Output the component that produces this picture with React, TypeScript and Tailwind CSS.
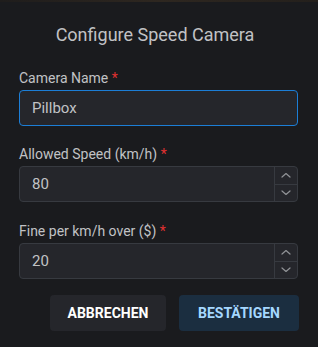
import React from "react";

function Chevron({ up }: { up?: boolean }) {
  return (
    <svg width="10" height="6" viewBox="0 0 10 6" fill="none" className="block">
      <path
        d={up ? "M1 5L5 1.5L9 5" : "M1 1L5 4.5L9 1"}
        stroke="#909296"
        strokeWidth="1.2"
        strokeLinecap="round"
        strokeLinejoin="round"
      />
    </svg>
  );
}

function Label({ text }: { text: string }) {
  return (
    <div className="text-[14px] leading-[22px] font-normal text-[#c1c2c5] mb-[1px]">
      {text} <span className="text-[#e03131]">*</span>
    </div>
  );
}

function NumberField({ label, value }: { label: string; value: string }) {
  return (
    <div>
      <Label text={label} />
      <div className="flex h-[36px] rounded-[4px] border border-[#373a40] bg-[#25262b]">
        <div className="flex flex-1 items-center pl-[12px] text-[15px] text-[#c1c2c5]">{value}</div>
        <div className="flex w-[23px] flex-col border-l border-[#373a40]">
          <div className="flex flex-1 items-center justify-center border-b border-[#373a40]">
            <Chevron up />
          </div>
          <div className="flex flex-1 items-center justify-center">
            <Chevron />
          </div>
        </div>
      </div>
    </div>
  );
}

export default function App() {
  return (
    <div
      className="w-[318px] h-[347px] bg-[#1a1b1e] overflow-hidden"
      style={{ fontFamily: "Roboto, 'Liberation Sans', sans-serif" }}
    >
      <div className="h-[2px] bg-gradient-to-r from-[#1f1d1c] via-[#2e2720] to-[#24201c]" />
      <div className="pl-[19px] pr-[20px]">
        <h2 className="mt-[19px] pr-[7px] text-center text-[18px] leading-[28px] text-[#c1c2c5]">
          Configure Speed Camera
        </h2>

        <div className="mt-[18px]">
          <Label text="Camera Name" />
          <div className="flex h-[36px] items-center rounded-[4px] border border-[#1c7ed6] bg-[#25262b] pl-[12px] text-[15px] text-[#c1c2c5]">
            Pillbox
          </div>
        </div>

        <div className="mt-[17px]">
          <NumberField label="Allowed Speed (km/h)" value="80" />
        </div>

        <div className="mt-[18px]">
          <NumberField label="Fine per km/h over ($)" value="20" />
        </div>

        <div className="mt-[16px] flex justify-end gap-[13px]">
          <button className="h-[36px] w-[116px] rounded-[4px] bg-[#25262b] text-[14px] font-bold uppercase text-white">
            Abbrechen
          </button>
          <button className="h-[36px] w-[120px] rounded-[4px] bg-[#1b2e40] text-[14px] font-bold uppercase text-[#a5d8ff] -mr-[1px]">
            Bestätigen
          </button>
        </div>
      </div>
    </div>
  );
}
